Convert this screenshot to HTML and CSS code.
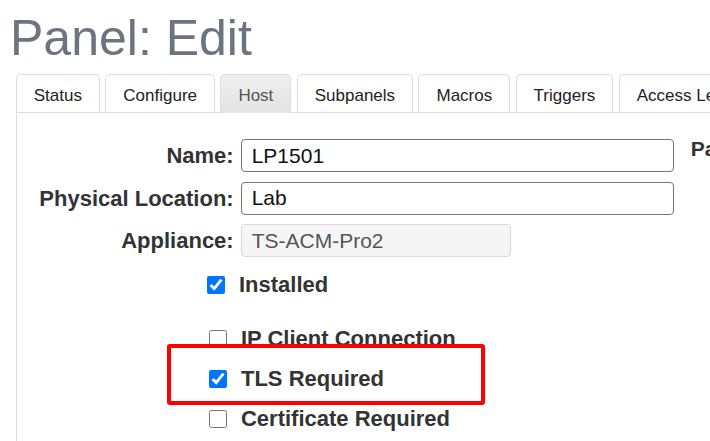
FILE: index.html
```html
<!DOCTYPE html>
<html lang="en">
<head>
<meta charset="utf-8">
<title>Panel: Edit</title>
<link rel="stylesheet" href="styles.css">
</head>
<body>
<div class="page">
  <h1 class="title">Panel: Edit</h1>
  <div class="tabset">
    <ul class="tabs">
      <li class="tab">Status</li>
      <li class="tab">Configure</li>
      <li class="tab active">Host</li>
      <li class="tab">Subpanels</li>
      <li class="tab">Macros</li>
      <li class="tab">Triggers</li>
      <li class="tab">Access Levels</li>
    </ul>
    <div class="panel">
      <div class="panel-body">
        <div class="form">
          <div class="grid">
            <label class="lbl" for="name">Name:</label>
            <input class="field" id="name" type="text" value="LP1501">
            <label class="lbl" for="loc">Physical Location:</label>
            <input class="field" id="loc" type="text" value="Lab">
            <span class="lbl">Appliance:</span>
            <div class="field readonly">TS-ACM-Pro2</div>
          </div>
          <div class="checks">
            <label class="check installed"><input type="checkbox" checked><span>Installed</span></label>
            <label class="check"><input type="checkbox"><span>IP Client Connection</span></label>
            <label class="check"><input type="checkbox" checked><span>TLS Required</span></label>
            <label class="check"><input type="checkbox"><span>Certificate Required</span></label>
            <div class="highlight"></div>
          </div>
        </div>
        <div class="side">
          <h3 class="side-title">Panel Info</h3>
        </div>
      </div>
    </div>
  </div>
</div>
</body>
</html>
```
FILE: styles.css
```css
html, body {
  margin: 0;
  padding: 0;
  background: #fff;
  overflow: hidden;
  width: 710px;
  height: 441px;
}

.page {
  padding-left: 8px;
  font-family: "Liberation Sans", Arial, sans-serif;
  color: #333;
}

.title {
  margin: 8px 0 6px 2px;
  font-size: 50px;
  line-height: 60px;
  font-weight: normal;
  color: #6c757d;
}

.tabset {
  margin-left: 7.7px;
}

.tabs {
  list-style: none;
  margin: 0;
  padding: 0;
  display: flex;
  flex-wrap: nowrap;
  gap: 5.4px;
}

.tab {
  flex-shrink: 0;
  white-space: nowrap;
  border: 1px solid #ddd;
  border-bottom: 0;
  border-radius: 5px 5px 0 0;
  padding: 11px 17px 6px;
  font-size: 17px;
  line-height: 20px;
  color: #222;
  background: #fff;
}

.tab.active {
  position: relative;
  z-index: 1;
  margin-bottom: -1px;
  padding-bottom: 7px;
  color: #555;
  background: linear-gradient(#f0f0f0, #e3e3e3);
}

.panel {
  width: 1000px;
  border-top: 1px solid #ddd;
  border-left: 1px solid #ddd;
  height: 400px;
}

.panel-body {
  display: flex;
  align-items: flex-start;
  padding-top: 26px;
}

.grid {
  display: grid;
  grid-template-columns: 217px 433px;
  column-gap: 7px;
  row-gap: 9.5px;
  align-items: center;
}

.lbl {
  text-align: right;
  font-size: 22px;
  line-height: 33px;
  font-weight: bold;
  color: #333;
}

.field {
  box-sizing: border-box;
  height: 33px;
  width: 433px;
  margin: 0;
  padding: 0 10px;
  border: 1px solid #767676;
  border-radius: 4px;
  font-family: "Liberation Sans", Arial, sans-serif;
  font-size: 21px;
  color: #111;
  background: #fff;
}

.field.readonly {
  width: 270px;
  line-height: 31px;
  border-color: #dadada;
  background: #f5f5f5;
  color: #555;
}

.checks {
  position: relative;
  margin: 8px 0 0 192.3px;
}

.check {
  display: flex;
  align-items: center;
  height: 40px;
  font-size: 22px;
  line-height: 26px;
  font-weight: bold;
  color: #333;
}

.check input {
  width: 18px;
  height: 18px;
  margin: 0 14px 0 0;
  accent-color: #0075ff;
}

.check.installed {
  margin-left: -2px;
  margin-bottom: 14px;
}

.highlight {
  position: absolute;
  left: -42px;
  top: 79px;
  width: 318px;
  height: 61px;
  box-sizing: border-box;
  border: 4px solid #ff0000;
  border-radius: 3px;
}

.side {
  margin-left: 17px;
  margin-top: -3px;
}

.side-title {
  margin: 0;
  font-size: 21px;
  line-height: 26px;
  font-weight: bold;
  color: #333;
  white-space: nowrap;
}
```
